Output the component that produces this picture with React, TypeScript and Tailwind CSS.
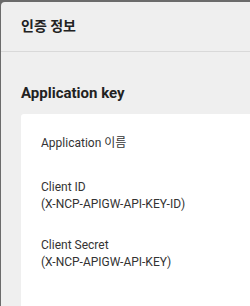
export default function App() {
  const font = { fontFamily: 'Roboto, "Noto Sans CJK KR", sans-serif' };
  return (
    <div className="w-[250px] h-[306px] overflow-hidden bg-[#6b6b6b] pt-[2px] pl-[1px]" style={font}>
      <div className="h-full rounded-tl-[4px] bg-[#efefef] flex flex-col">
        {/* header */}
        <div className="h-[50px] border-b border-[#d9d9d9] flex items-center pl-[20px]">
          <h1 className="text-[14px] font-bold text-[#222]">인증 정보</h1>
        </div>

        <div className="pl-[20px] flex flex-col flex-1">
          <h2 className="mt-[31px] text-[15px] font-bold text-[#222] leading-[20px]">Application key</h2>

          <div className="mt-[11px] flex-1 bg-white rounded-tl-[3px] pl-[20px] pt-[21px] text-[12px] text-[#333] leading-[17px]">
            <p>Application 이름</p>
            <p className="mt-[27px]">Client ID</p>
            <p>(X-NCP-APIGW-API-KEY-ID)</p>
            <p className="mt-[24px]">Client Secret</p>
            <p>(X-NCP-APIGW-API-KEY)</p>
          </div>
        </div>
      </div>
    </div>
  );
}
